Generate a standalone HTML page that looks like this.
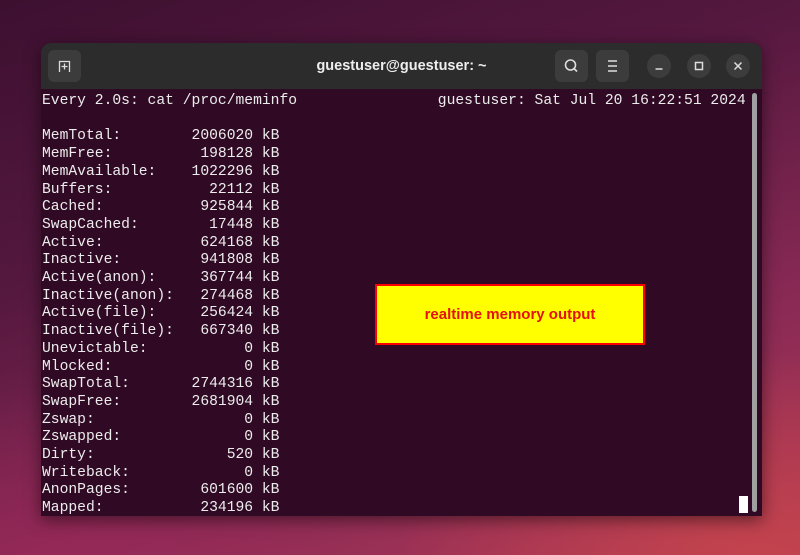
<!DOCTYPE html>
<html><head><meta charset="utf-8"><style>
html,body{margin:0;padding:0;width:800px;height:555px;overflow:hidden}
body{background:linear-gradient(160deg,#3d1030 0%,#55183f 35%,#8a2a55 70%,#b33a55 100%);position:relative;font-family:"Liberation Sans",sans-serif}
.bg2{position:absolute;inset:0;background:radial-gradient(ellipse 500px 300px at 750px 560px,rgba(200,70,75,.8),transparent 70%),radial-gradient(ellipse 400px 250px at 50px 560px,rgba(160,40,90,.6),transparent 70%)}
.win{position:absolute;left:41px;top:43px;width:721px;height:473px;background:#300a24;border-radius:10px 10px 0 0;overflow:hidden;box-shadow:0 4px 16px rgba(0,0,0,.5)}
.hdr{position:absolute;left:0;top:0;width:100%;height:46px;background:#2c2c2c}
.btn{position:absolute;top:7px;width:33px;height:32px;background:#3c3c3c;border-radius:6px}
.cb{position:absolute;top:11px;width:24px;height:24px;background:#3c3c3c;border-radius:50%}
.title{position:absolute;top:0;left:0;width:100%;text-align:center;line-height:46px;color:#eee;font-weight:bold;font-size:14.5px}
pre{position:absolute;left:1px;top:50px;margin:0;font-family:"Liberation Mono",monospace;font-size:14.67px;line-height:17.7px;color:#ececec}
.sb{position:absolute;left:711px;top:50px;width:5px;height:419px;background:#a0a0a0;border-radius:3px}
.cur{position:absolute;left:698px;top:453px;width:9px;height:17px;background:#fff}
.box{position:absolute;left:375px;top:284px;width:266px;height:57px;background:#ff0;border:2px solid #f00;color:#e51010;font-weight:bold;font-size:15px;text-align:center;line-height:57px}
</style></head><body>
<div class="bg2"></div>
<div class="win">
<div class="hdr">
<div class="btn" style="left:7px"><svg width="33" height="32"><path d="M11.5 22V11.5h10V22M16.5 13.5v6M13.5 16.5h6" stroke="#ddd" stroke-width="1.3" fill="none"/></svg></div>
<div class="title">guestuser@guestuser: ~</div>
<div class="btn" style="left:514px"><svg width="33" height="32"><circle cx="15.5" cy="15" r="5" stroke="#ddd" stroke-width="1.6" fill="none"/><path d="M19 18.5l3 3" stroke="#ddd" stroke-width="1.6"/></svg></div>
<div class="btn" style="left:555px"><svg width="33" height="32"><path d="M12 11h9M12 16h9M12 21h9" stroke="#ddd" stroke-width="1.4"/></svg></div>
<div class="cb" style="left:606px"><svg width="24" height="24"><path d="M8.5 15h7" stroke="#ddd" stroke-width="1.5"/></svg></div>
<div class="cb" style="left:646px"><svg width="24" height="24"><rect x="8.5" y="8.5" width="7" height="7" stroke="#ddd" stroke-width="1.5" fill="none"/></svg></div>
<div class="cb" style="left:685px"><svg width="24" height="24"><path d="M8.5 8.5l7 7M15.5 8.5l-7 7" stroke="#ddd" stroke-width="1.5"/></svg></div>
</div>
<pre>Every 2.0s: cat /proc/meminfo                guestuser: Sat Jul 20 16:22:51 2024

MemTotal:        2006020 kB
MemFree:          198128 kB
MemAvailable:    1022296 kB
Buffers:           22112 kB
Cached:           925844 kB
SwapCached:        17448 kB
Active:           624168 kB
Inactive:         941808 kB
Active(anon):     367744 kB
Inactive(anon):   274468 kB
Active(file):     256424 kB
Inactive(file):   667340 kB
Unevictable:           0 kB
Mlocked:               0 kB
SwapTotal:       2744316 kB
SwapFree:        2681904 kB
Zswap:                 0 kB
Zswapped:              0 kB
Dirty:               520 kB
Writeback:             0 kB
AnonPages:        601600 kB
Mapped:           234196 kB</pre>
<div class="sb"></div>
<div class="cur"></div>
</div>
<div class="box">realtime memory output</div>
</body></html>
